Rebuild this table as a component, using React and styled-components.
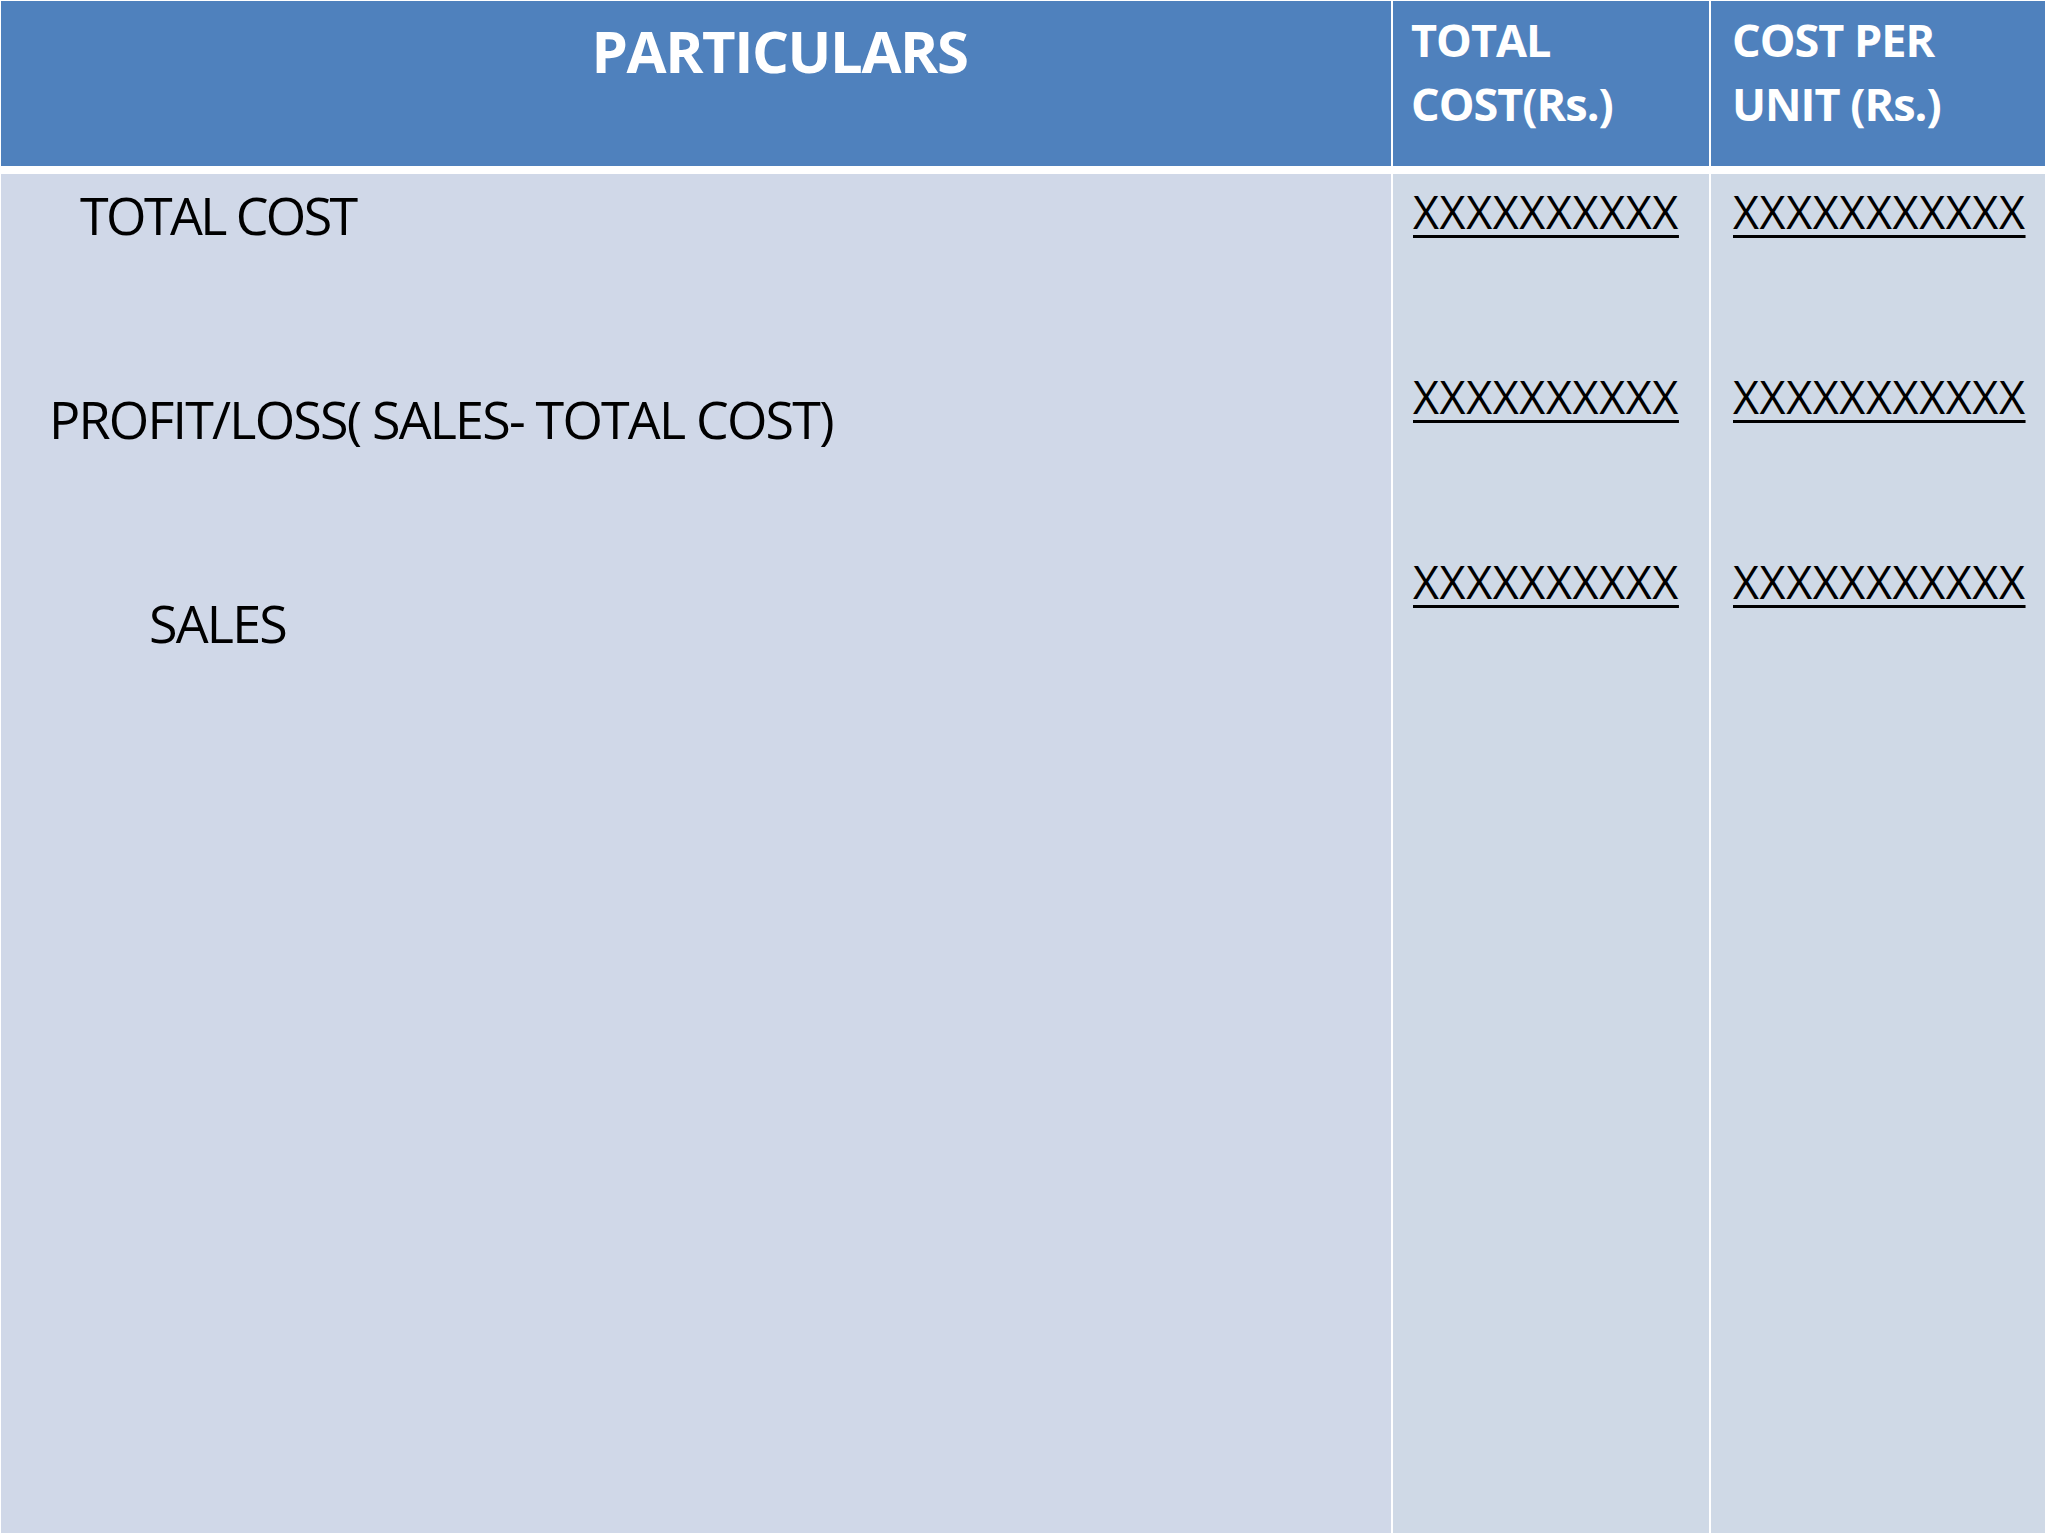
import React from "react";
import styled, { createGlobalStyle } from "styled-components";

const Global = createGlobalStyle`
  html, body { margin: 0; padding: 0; background: #fff; }
  body { font-family: "Open Sans", "Noto Sans", sans-serif; }
`;

const Table = styled.div`
  display: grid;
  grid-template-columns: 1390px 316px 334px;
  grid-template-rows: 165px 1359px;
  column-gap: 2px;
  row-gap: 8px;
  padding: 1px 2px 3px 1px;
  background: #fff;
`;

const HeadCell = styled.div`
  background: #4f81bd;
  color: #fff;
  font-weight: 700;
  padding: ${(p) => p.$pad};
  text-align: ${(p) => p.$align || "left"};
`;

const Title = styled.div`
  font-size: 58px;
  line-height: 70px;
  letter-spacing: -1.4px;
`;

const HeadLabel = styled.div`
  font-size: 45px;
  line-height: 64px;
  letter-spacing: -1px;
  white-space: nowrap;
`;

const BodyCell = styled.div`
  background: ${(p) => p.$bg};
  display: flex;
  flex-direction: column;
  gap: ${(p) => p.$gap}px;
  padding: ${(p) => p.$pad};
  color: #000;
`;

const Item = styled.div`
  font-size: 52px;
  line-height: 62px;
  letter-spacing: ${(p) => p.$spacing}px;
  padding-left: ${(p) => p.$indent}px;
  white-space: nowrap;
`;

const Amount = styled.div`
  font-size: 45px;
  line-height: 56px;
  letter-spacing: 0.6px;
  white-space: nowrap;
  text-decoration: underline;
  text-decoration-thickness: 3px;
  text-underline-offset: 6px;
`;

const items = [
  { label: "TOTAL COST", indent: 79, spacing: -2.6 },
  { label: "PROFIT/LOSS( SALES- TOTAL COST)", indent: 48, spacing: -1.8 },
  { label: "SALES", indent: 148, spacing: -1.8 },
];

export default function App() {
  return (
    <>
      <Global />
      <Table>
        <HeadCell $pad="15px 0 0 167px" $align="center">
          <Title>PARTICULARS</Title>
        </HeadCell>
        <HeadCell $pad="7px 0 0 18px">
          <HeadLabel>TOTAL</HeadLabel>
          <HeadLabel>COST(Rs.)</HeadLabel>
        </HeadCell>
        <HeadCell $pad="7px 0 0 21px">
          <HeadLabel>COST PER</HeadLabel>
          <HeadLabel>UNIT (Rs.)</HeadLabel>
        </HeadCell>

        <BodyCell $bg="#d0d8e8" $gap={142} $pad="10px 0 0 0">
          {items.map((it) => (
            <Item key={it.label} $indent={it.indent} $spacing={it.spacing}>
              {it.label}
            </Item>
          ))}
        </BodyCell>
        <BodyCell $bg="#cfd9e6" $gap={129} $pad="10px 0 0 20px">
          {[0, 1, 2].map((i) => (
            <Amount key={i}>XXXXXXXXXX</Amount>
          ))}
        </BodyCell>
        <BodyCell $bg="#cfd9e6" $gap={129} $pad="10px 0 0 22px">
          {[0, 1, 2].map((i) => (
            <Amount key={i}>XXXXXXXXXXX</Amount>
          ))}
        </BodyCell>
      </Table>
    </>
  );
}
